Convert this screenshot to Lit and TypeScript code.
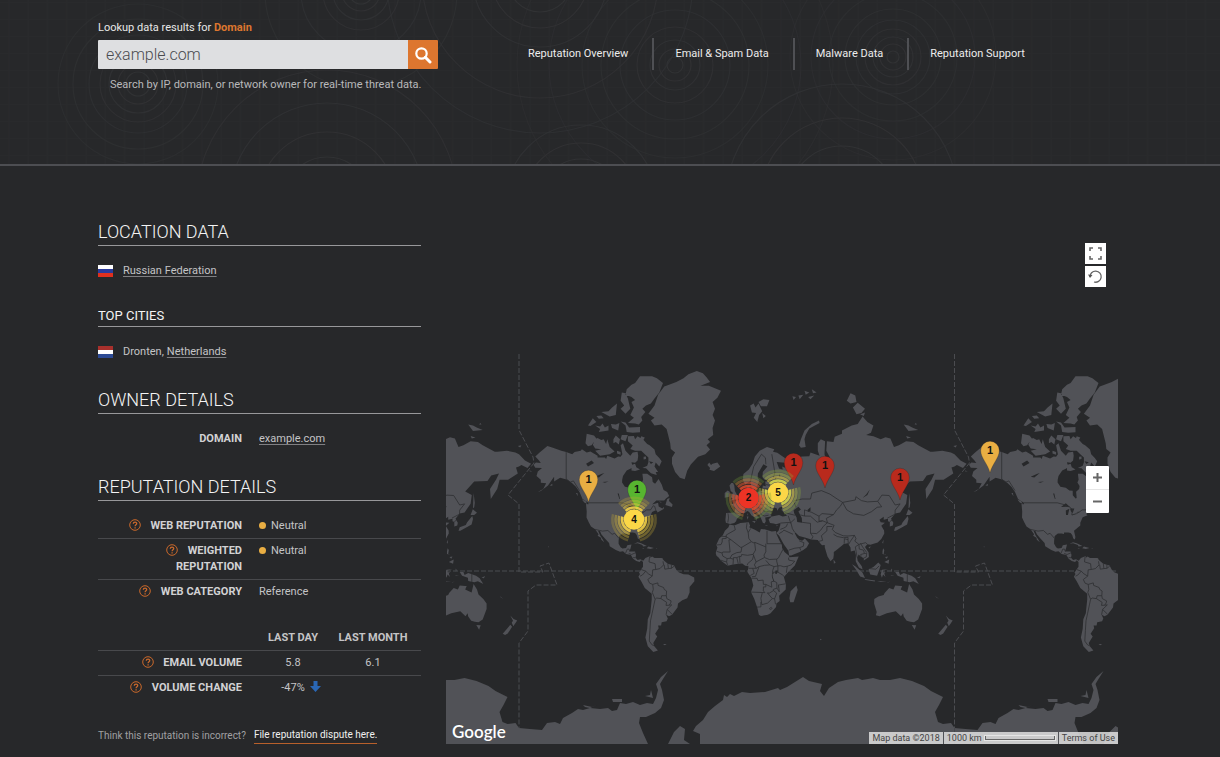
import { LitElement, html, css, svg } from "lit";
import { customElement, property, state } from "lit/decorators.js";

/* ---- Map projection: Mercator, one world spans WORLD units ---- */
const WORLD = 435.5;
const LON0 = 736.75;
const EQUATOR = 571;
const R = WORLD / (2 * Math.PI);

const project = (lon: number, lat: number): string => {
  const x = LON0 + (lon * WORLD) / 360;
  const y = EQUATOR - R * Math.log(Math.tan(Math.PI / 4 + (lat * Math.PI) / 360));
  return `${x.toFixed(1)} ${y.toFixed(1)}`;
};
const trace = (points: string, close: boolean): string =>
  "M" +
  points
    .split(",")
    .map((p) => {
      const [lon, lat] = p.trim().split(" ").map(Number);
      return project(lon, lat);
    })
    .join("L") +
  (close ? "Z" : "");

/* Coastlines as "lon lat" pairs */
const LAND = [
  "-168 65.6,-166 66.4,-162 66.2,-163.5 67,-166.5 68.3,-163 69.5,-156.5 71.3,-152 70.8,-145 70,-141 69.6,-136 69,-134 69.6,-129 70,-128 70.4,-124 69.5,-121 69.8,-115 68.5,-115 68,-109 68,-108 67.5,-107 68.5,-101 67.7,-98 68.3,-96 68.2,-94.5 69,-96 71.5,-94 72,-92 70,-91 69.6,-88 68.5,-86 69.5,-82 69.7,-81.5 68.5,-82 67,-84 66.3,-87 66.5,-86 64.8,-88 64.2,-91 63.6,-94 61.5,-94.7 60,-94.8 58.8,-92.5 57,-88 56.5,-85 55.3,-82.3 55.1,-82.2 52.9,-80 51.3,-79 51.6,-79.5 54.6,-77 56,-76.6 57.3,-78.4 58.8,-77.4 60,-78 62.4,-74 62.4,-70 61,-69.5 59,-67.5 58.3,-64.6 60.3,-62 58,-60.5 55.5,-57.5 54.5,-55.8 52.5,-58.5 51.3,-60 50.2,-66.5 50.2,-70 48,-65 49,-64.5 47,-61.5 45.8,-60 46.8,-60.5 45.5,-65.5 43.5,-66 44.5,-67 44.8,-70 43.8,-71 42.3,-70 41.8,-74 40.6,-76 37,-76 35.2,-78 33.9,-81.2 31.5,-80.1 27,-80.5 25.2,-81.8 26,-82.7 28.5,-84 30,-86 30.4,-89.5 30.3,-89.5 29.2,-91.5 29.5,-94.5 29.5,-97.2 27.7,-97.7 24,-97.7 22,-96 19.2,-94.5 18.2,-91.5 18.6,-90.5 20.8,-87 21.5,-87.8 18.3,-88.7 15.9,-84 15.8,-83.3 13,-83.7 10.9,-82 9,-79.6 9.6,-77.3 8.5,-77.5 7.5,-79 8.9,-80.3 7.4,-83 8.3,-85.7 10,-87.5 13,-91.5 14,-94 16.1,-96.5 15.7,-100 17,-105 20,-105.5 22.5,-109 26,-112 29,-113 31.2,-114.8 31.7,-112.8 28,-111 25.5,-109.5 23.1,-112 25,-112.2 26.5,-115 28,-114.2 29,-117.1 32.6,-120.5 34.5,-122.5 37.5,-124.2 40.4,-124 44,-124.6 48.4,-122.5 48.2,-123 49.2,-127.5 51,-130 54.5,-133 57,-136 58.5,-140 60,-146 60.8,-151 59.3,-151 61.2,-153.5 59.5,-156 57.5,-162 55,-164.5 54.5,-160 56,-157.5 58.5,-162 58.7,-162 60,-165.5 61.5,-164.5 63.2,-161 64.5,-166.5 64.6",
  "-77.3 8.5,-75.5 10.7,-71.5 12.3,-71.5 10.9,-70 12,-68 10.7,-62 10.7,-60 8.5,-57 6,-51.8 4.5,-50 1,-48 -1,-44 -2.7,-40 -2.9,-35.2 -5.3,-35 -8.5,-39 -13,-39 -17.5,-41 -22,-45 -23.5,-48.6 -26,-49 -28.8,-53.5 -34,-56 -35,-58.4 -34,-57 -36.5,-58 -38.3,-62 -39,-62.5 -41,-65 -41,-64.5 -42.7,-67.5 -46,-65.8 -47.5,-69 -51,-68.3 -52.5,-65.2 -54.7,-69 -55.4,-73.5 -52.7,-75.5 -48,-74 -43,-73.5 -37,-71.5 -33,-70.3 -23,-70.3 -18.4,-76 -14,-79 -8.5,-81.3 -4.7,-80 -2.5,-80.8 -1.5,-79 1.5,-77.5 3.5,-77.5 7.5",
  "-73 78.2,-68 79.5,-65 81,-60 82,-56 82.2,-50 82.5,-44 82.9,-40 83.3,-33 83.6,-28 83.4,-25 83,-22 82.5,-30 82.1,-23 82.1,-13 81.5,-16 80.6,-20 80,-18 79,-20 78,-18 77,-20 75.5,-19.5 74,-24 73,-22 72.3,-25 71.5,-22 70.3,-26 69,-32 68.2,-38 65.7,-41 63.5,-43 60.2,-47 60.8,-51 63,-53.5 66,-53.5 68,-51 69.5,-54.5 70.5,-55 72,-58 75.3,-62 76.2,-68 76,-71 77,-68 77.5",
  "-90 76.5,-84 76.4,-81 76.2,-78 77,-79 77.6,-75.5 78.5,-78 79,-75 79.5,-71 79.8,-68 80.5,-64 81.3,-61 82.4,-66 82.9,-70 83.1,-80 83.1,-84 82.4,-87 82.2,-91 81.7,-92 81,-87 80.7,-84 80.3,-87 80,-85 79.2,-88 78,-85 77.5",
  "-95 81.3,-92 81.2,-90 80.5,-88 79,-92 78.2,-96 79,-93 79.5,-96 80.2",
  "-96 76.8,-92 76.6,-89 75.6,-80 75.7,-80 74.6,-86 74.5,-91 74.7,-92 76",
  "-90 73.7,-85 73.8,-84 73,-82 73.7,-77 72.8,-74 71.8,-72 71.5,-68 70.3,-67 69,-64 67.8,-62 66.8,-64 65,-67 66.4,-68 65,-65 63,-67 63,-66 61.9,-71 62.6,-75 64.4,-78 64.5,-74 65.3,-73 66.5,-73 68,-76 69,-79 70,-84 70,-88 70.5,-86 71.4,-90 72.5",
  "-119 71.6,-117 73,-115 73.3,-112 72.8,-110 73,-108 71.8,-107 73,-105 71,-101 69.8,-105 69,-113 68.5,-117 70,-112 70.4,-117 70.6",
  "-125 72,-124 74.3,-118 73.9,-116 73.2,-120 71.5,-123 71.2",
  "-117 76,-113 75.8,-111 76.4,-109 75.6,-106 76,-106 75,-114 74.7,-113 75.3",
  "-102 72,-102 73,-100 73.9,-96.5 73,-97.5 71.7,-100 72.3", "-95 74,-90 74,-92 72.5,-96 73",
  "-104 76.3,-100 76.2,-97 76.5,-98 75,-103 75.5", "-112 78.5,-106 78.6,-103 79.2,-99 79.8,-100 78,-105 77.7",
  "-123 76,-119 77.4,-116 76.7,-121 75.9", "-116 77.8,-112 77.9,-110 77.4,-114 77.3", "-99 70,-96 69.6,-96 68.8,-99 69.2",
  "-87 65.5,-84 66,-83 64.8,-80 64,-84 63.4,-87 63.6", "-79 73.7,-76 73.4,-77 72.9,-80 73", "-77 68.2,-75 68.3,-75 67.5,-77 67.4",
  "-59 47.8,-57.5 51,-55.5 51.5,-56 50,-53 48,-53.5 46.7", "-128 50.7,-125 50,-123.5 48.4,-126 49.2", "-133 54,-131.7 54,-131.3 52.4",
  "-64.4 49.9,-61.8 49.2,-63 49.1", "-84.9 21.9,-82 23.1,-79 22.4,-74.3 20.2,-77.5 19.9,-78 21,-82 22.4", "-74.4 18.4,-73 19.9,-68.5 18.6,-71.5 17.8",
  "-78.3 18.4,-76.3 18.2,-77.2 17.8", "-67 18.4,-65.7 18.3,-66 18", "-61.8 10.7,-61 10.7,-61.5 10.1", "-155.9 20,-155 19.6,-155.6 19",
  "-154.5 57.5,-152.5 58.3,-152.5 57.4", "-171.5 63.6,-169 63.3,-171 63.2", "-61 -51.5,-58 -51.5,-59.5 -52.2",
  "-24.3 65.5,-22.8 66.4,-21.3 65.5,-20 66,-16 66.4,-13.6 65,-18.8 63.4,-22.6 63.9,-22 64.5",
  "11 79.5,14 79.8,15.5 79.2,18 79.8,21 78.6,18.5 78,17 76.7,14 77.5,16 78.3,12.5 78.4", "18 80,22 80.4,27 80.3,25 79.4,20 79.4", "21 78.3,24 77.8,22 77.4",
  "46 80.8,49 80.7,47 80.3", "51 80.9,55 81,52 80.4", "56 81.5,60 81.3,57 81", "59 80.7,64 80.9,61 80.4", "62 81.7,66 81.3,63 81.2",
  "91 80.2,94 81.2,98 80.9,99 80,94 79.8", "96 79.2,100 79.9,106 79,103 78.3,99 78.1", "102 78.1,106 78.4,105 77.8",
  "51.5 71.5,53 73,56 75,62 76.3,68 77,68.5 76.5,60 75.4,57 74,56 73,57 71,53 70.8",
  "138 76.2,142 76,145 75.6,150 75.1,142 74.9", "140 73.8,144 73.4,141 73.2", "148 76.5,149 76.2,147 76.2", "179 71.3,182 71.5,181 70.9",
  "-9 37,-9.4 38.8,-8.8 43.2,-1.8 43.4,-1.2 46,-4.7 48.3,-1.5 48.7,-1.6 49.7,1.5 50.5,4 51.8,5 53.3,8.5 53.8,8.2 57,10.6 57.6,10.5 55,11 54,14 54,18.5 54.7,21 55,21.5 57.5,24 57.2,23.5 59.2,28 59.5,30 60,23 60,21.3 61,21.5 63,25.3 65,22 65.8,17.5 62.5,17.3 60.7,18.8 59.8,16.5 57,14.2 55.5,12.8 55.6,11.2 59,10.5 59.3,7 58,5 60,5.5 62.3,10 64,13 66,15 68.3,19 70,25 71,31 70.4,30 69.7,33.5 69.4,41 67.5,40 66.3,33 66.6,35 64.3,38 64,37.5 65,40 64.6,40.5 66,43.5 66.3,44 68.5,46 67,49 67.8,54 68.3,60 68.4,61 69.5,65 69,68.5 68.5,67 70,67 72,69.5 73,73 72.5,72.5 69,74 67,77 68,74 70,74.5 72.5,80 72.3,81 73.6,87 74.3,87 75,95 76,100 76.3,104 77.7,108 76.7,113 76,111 74.5,107 74,113 73.7,119 73,123 73.5,127 73.2,130 71,134 71.5,140 72.5,146 72.3,150 71.5,160 69.7,162 69.7,170 70,177 69.5,180 69,185 67,190 66,187 64.5,182 65.5,180 65,177.5 64.7,179 62.5,171 60,164 60,163 58,162 56,156.7 51,156 56,161 60,163.5 62.5,157 61.7,154 59.5,143 59.3,135.5 54.8,141 53,140 48.5,135 43.5,131 42.8,127.5 39.6,129.4 37,129 35.2,126.5 34.5,126.5 37.5,125 38,125 39.6,121.5 39,121.5 40.9,118 39,119 37.3,122.5 37,119.5 35,121.8 31.8,122 29.5,119.5 25.5,116.5 23,110.5 21.2,108 21.6,106 19.5,109 15,109.2 11.5,105 8.7,105 10.5,102.5 12,100.8 13.4,99.5 11,100 8.5,103.4 4,104 1.3,101 2.8,98.3 8,98.5 13,97.5 16.8,94.3 16,94 19,91.8 22.4,88.5 21.7,86.8 20.5,82 16.7,80.2 15.5,80.2 13,79.8 10.3,77.5 8,75 12,72.8 19,72.7 21,70.5 20.8,69 22.3,67 24.8,61.5 25.1,57 26.5,51.5 27.8,48.5 30.2,48 29.8,50 26.5,51.5 25,54 24.2,56.3 26,59.8 22.4,57.8 19,55 17,52 15.6,45 12.8,43.3 12.7,42.7 16.5,39 21.3,35 28,32.6 30,34.5 31.5,36 35.5,36 36.8,32.5 36,30.5 36.5,27.5 36.8,26.3 39.3,29 41,35 42,38 41,41.5 41.5,37 45,38 47,35 46.3,33.5 44.5,33 46,30.7 46.4,28.7 44,28 42,29 41.2,26 40.7,23.5 40.3,24 38,23 36.5,21.5 37,19.4 41,19 42,15 44.3,13.6 45.6,12.3 45.2,13.6 43.5,18.5 40.2,16.5 39.8,16 38,15.7 40,12.3 41.7,10.3 43.8,8.8 44.4,6.5 43.1,3.1 43.2,3.2 41.8,0 39.5,-.5 38,-2 36.8,-5.5 36.1",
  "-5.5 50.1,-3 51.4,-5 51.8,-4.3 53.3,-3 54,-5 55,-6 57.5,-4.5 58.6,-3 58.6,-2 57.5,-1.5 55,.3 53,1.7 52.5,1 51.2", "-10 51.7,-10 54,-7.5 55.3,-5.7 54.5,-6.3 52.2",
  "12.5 38,15.5 38.2,15 36.8", "8.3 41,9.7 41,9 39", "8.7 42.5,9.4 43,9.3 41.5", "23.6 35.5,26.2 35.2,24 35", "32.4 35,34.5 35.6,33 34.6", "11 55.7,12.5 56,12 55",
  "-6 35.8,-2 35.1,3 36.8,10 37.3,11 35,10.3 34,15 32.3,19 30.4,20 32.7,23 32.6,29 31,32.5 31.3,32.5 29.8,35.5 24,37.3 21,37.5 18.7,39.5 15.5,43.2 12.5,43.5 11.3,51.2 11.9,48 4.5,42 -1.5,39 -5,40.6 -11,40.5 -15,35 -20,35.5 -24,32.8 -26,32.5 -28.5,28 -33,25.7 -34,20 -34.8,18.3 -34,17 -29,14.5 -22.5,11.8 -17,13.7 -12,12.2 -6,9 -1,9.7 4,7 4.4,4.5 6.3,1 6,-4 5.2,-7.5 4.4,-13 8.5,-15 11,-16.7 12.5,-17.4 14.7,-16 19,-17 21,-14.5 26,-11.5 28.3,-9.8 31.5,-6.8 34",
  "49.3 -12,50.4 -15.5,47 -25,44.2 -25,43.5 -22,44.5 -16.5",
  "113.7 -22.5,117 -20.7,121.5 -19.5,122.2 -18,126 -14,129.5 -15,131 -12,135.5 -12.2,136.8 -12.3,135.5 -15,140.8 -17.6,142.5 -10.8,145.3 -15,146.5 -19,150.5 -22.5,153.2 -26,153.2 -30,150 -37.2,146.5 -39,143.5 -38.7,140.5 -38,138 -35.2,137.5 -33,135.8 -35,131.5 -31.5,124 -33,118 -35,115 -34.3,115.7 -32,113.5 -26",
  "144.7 -40.8,148.3 -40.9,147 -43.6", "172.8 -34.5,175.5 -36.8,178.5 -37.8,175.3 -41.5,174 -39.3,175 -38", "172.8 -40.6,174.3 -41.8,170.7 -45.9,168.5 -46.6,166.5 -46",
  "131 -.8,134 -.8,135 -3.3,138 -1.6,144.5 -3.9,147.5 -6,150.5 -10.6,146 -8.5,143 -9.2,138 -8.3,137.8 -5.5,133 -4", "149 -5.5,152 -4.2,151 -6",
  "109 1.5,113 3.3,117 7,119 5,117.8 1,116 -4,110.3 -3", "95.3 5.6,98 4,104 -1.5,106 -5.8,102 -4.5,98.7 1", "105.5 -6.5,114.4 -7.8,114 -8.7,106.5 -7.5", "116 -8.5,124 -8.4,119 -9",
  "120 -5.5,119 -3,120 1,125 1.5,121 .5,121 -1,123 -1,122 -2,123 -5,121 -3", "127.5 2,128.5 1,127.8 -.8", "127 -3.3,130.5 -3.2,128 -3.6", "124 -10,127 -8.5,125 -9.3",
  "120.5 16,121 18.5,122 17,121.5 14,124 13,120.5 14", "122 7.5,126 9.5,125.5 6", "122.5 11.5,125 12,124 10", "120.2 23,121.5 25.2,121 22", "109 19.5,111 19.8,109.5 18.3",
  "130 31.5,131 34,136 35.5,137 37.2,140 40,141.4 41.3,142 39.5,140.8 35.8,136 33.7,131.5 31.5", "140 42,141.8 45.4,145.3 43.3,143 42", "142 46,142.5 54,143.5 49,143 46.5", "80 9.5,81.8 7,80.3 6",
  "164 -20.3,167 -22.3,165 -21.5", "69 -48.8,70.3 -49.2,69 -49.6",
].map((p) => trace(p, true)).join("");

/* Lakes and inland seas */
const WATER = [
  "47 44.8,51 46.8,53 45.3,51 44,53.8 40,54 37,50 37.5,49.5 40.3,47.5 43", "58.5 45,61 46.5,61 44.5,59 43.8", "104 51.6,108 53,110 55.7,107 53.3",
  "-92 46.7,-88 48.8,-84.5 46.6,-88 46.8", "-87.8 42,-86.3 42,-85 45.7,-88 44.7", "-84.5 45.8,-81 45.8,-82.3 43.2,-83.7 44", "-83 41.6,-79 42.8,-82 42.2", "-79.5 43.3,-76.3 43.7,-78 43.9",
  "-98.5 53.8,-97 51,-96.5 51,-97.5 53.8", "-117 61.2,-112 62.3,-109.5 62.7,-114 60.9", "-124.5 66,-120 67,-118 66.2,-123 65", "-111 59,-106 59.3,-109 58.7", "-72.5 66.8,-69 66.5,-71 65.9",
  "31 60.8,33 61,32 59.9", "35 62.5,36.3 61.3,35 61.2", "32 .5,34 .3,33 -2.4,31.7 -2", "29.3 -3.5,31 -8.6,30.3 -8.5,29.1 -5", "34 -10,34.9 -13.8,34.3 -13",
].map((p) => trace(p, true)).join("");

/* National borders */
const BORDERS = [
  "-141 69.6,-141 60.2,-137.5 59,-135 59.5,-130 55.2", "-123 49,-95 49,-89.5 48,-84.5 46.5,-82.5 45.3,-83 42,-79 42.8,-76.3 44,-74.5 45,-71.3 45,-69 47.4,-67.8 47,-67 45",
  "-117.1 32.5,-111 31.3,-106.5 31.7,-103 29,-101 29.7,-97.3 26", "-92 14.5,-90.5 17.8,-89 17.8,-88.5 16", "-89.3 14.4,-87 13.5,-83.3 15", "-85.7 11,-83.7 10.9",
  "-72 12,-72.5 7.5,-67.5 6,-67 1.2,-69.5 1,-69.9 -4.2,-73 -2.3,-75.3 -.2,-79 1.2", "-67 1.2,-63.5 2,-60.5 5,-61 8", "-60 5,-59.5 1.5,-56.5 2,-57 6", "-56.5 2,-54 2.2,-54 5.5", "-54 2.2,-51.7 4",
  "-80 -4.3,-78 -3.3,-75.3 -.2", "-69.9 -4.2,-73.5 -7,-72 -10,-69.5 -11,-69 -15,-69.8 -17.5,-67.5 -22.8,-66.2 -21.8,-62.7 -22.2,-62 -20,-58.2 -20,-58 -16.3,-60 -15,-60.5 -13.5,-65 -11.8,-65.3 -9.8,-69.5 -11",
  "-62.7 -22.2,-58 -25,-58.5 -27.3,-55.8 -27.2,-54.6 -25.5,-54.3 -24,-57.8 -22.2,-58.2 -20", "-67.5 -22.8,-68.5 -27,-70 -33,-71.3 -38,-71.8 -44,-72.3 -50,-70 -52,-68.5 -52.4", "-55.8 -27.2,-53.7 -27,-57.6 -30.2,-53.5 -33.6", "-57.6 -30.2,-58.4 -34",
  "-2 35,-1.2 32.2,-8.7 28.5,-8.7 27.3,-13 27.6", "-8.7 27.3,-8.7 26,-12 25.8,-12 23.4,-13 21.3,-17 21", "-8.7 27.3,-4.8 25,3.2 19.2,4.2 19.2,12 23.5,14.2 22.6,15 23,24 19.5", "8.5 36.8,8 33.5,9.5 30.3,10 26,12 23.5", "9.5 30.3,11.5 33.2", "25 31.5,25 22,36.8 22", "24 22,24 15.7,22.5 13,23 11,27 9.5,33 9.8,34.5 10.8,36.3 14.3,38.5 18",
  "-4.8 25,-6.5 24.9,-5.5 15.5,-11.5 15.5,-12.2 14.7,-16.5 16", "4.2 19.2,3.5 15.4,0 15,-4 13.2,-5.5 10.5,-8 10.2,-11.5 12.2,-12.2 14.7", "-8 10.2,-8.4 7.5,-10.5 8,-13.3 9", "-8.4 7.5,-7.5 4.5", "-5.5 10.5,-2.8 9.7,-3.1 5.2", "-2.8 9.7,-2.8 11,0 11,1.2 6.2", "0 11,2.3 12,2.7 6.4", "2.3 12,3.6 11.8,4 13.5,9 12.9,13.5 13.7,15.5 17,14.8 22.8", "13.5 13.7,15 10,16 7.5,22.8 11", "14 13,13 9.5,9 6,8.7 4.7", "16 7.5,14.6 5,16.2 2.2,9.8 2.2", "16.2 2.2,18.5 3.6,23 4.7,27.3 5,30.9 3.6,29.7 .5,29.5 -3,29.3 -4.5", "27.3 5,24 8.7", "13.2 2.2,14.4 -2,11.2 -3.7", "18.5 3.6,16.5 -1.5,15.5 -4.5,12.5 -4.7", "12.5 -5.9,16.8 -6,17.5 -8,21.8 -7.5,22 -11,24 -11,24 -13,22 -13,22 -16.2,23.3 -17.6,11.8 -17.2", "30.9 3.6,34 4.2,34 -1,37.7 -3.1,39.3 -4.7", "34 -1,30.5 -1,30 -2.5", "34 4.2,36 4.4,39 3.5,41.8 4,45 5,48 8,43 9,42.8 11", "34 4.2,33 8,33 9.8", "41.8 4,41 -1.6", "24 -11,29 -13.3,28.5 -9,30.7 -8.3,33 -9.5,33.3 -14,30.2 -15,30.4 -16,27 -18,25.3 -17.8", "30.4 -16,33 -18,31.3 -22.3,32 -26.5", "33.3 -14,35.2 -17,34.5 -11.5,40.4 -10.5", "25.3 -17.8,29.4 -22.2,31.3 -22.3", "29.4 -22.2,25.5 -25.6,20.8 -26.8,20 -22,21 -18", "20 -24.8,20 -28.4,16.7 -28.6", "27 -29.7,28.5 -28.7,29.3 -29.5,28 -30.4,27 -29.7",
  "-7.3 43,-7 41.9,-6.8 40,-7.4 37.2", "-1.8 43.4,3 42.5", "2.5 51,6 49.5,8.2 49,7.6 47.6,6 46.3,7.5 44", "7 53.3,6 50.8,6 49.5", "8.6 54.9,9.9 54.8", "7.6 47.6,13 47.6,14 48.6,12.1 50.3,14.8 51,14.3 53.9", "14.8 51,18.8 49.5,22.5 49.1,24 50.8,23.6 52.6,23.3 54,19.8 54.4", "7 46,10.5 46.8,13.7 46.5,13.7 45.6", "14 48.6,17 48,22 48,27 48.3,28.2 45.5", "17 48,16.3 46.5,19 45.9,21 46.2,22.7 44.2,28.5 43.8", "19 45.9,19.3 43.5,20.5 42,23 41.3,26.3 41.8", "24 50.8,30.5 51.5,34 52,40 49.6,38.3 47.2", "23.6 52.6,28 56,31 53,30.5 51.5", "27.5 59.3,28 56,21 56", "24.3 57.9,27.4 57.6", "30 60.5,31.5 62.8,29 69", "24.1 65.8,23.7 67.9,20.5 69,14 65,12 61,11.3 59",
  "40 43.3,47 42,48.5 41.8", "42.5 41.5,44.5 37,48 39.5", "36 36.8,42.3 37.2,44.8 37,46 33,48 30.3", "42 36.5,41 34.4,38.8 33.4,36 32.5", "39 32,46.5 29", "35 29.5,38 31,39 32", "43 17,48 18.5,52 19,55 20,55.5 22.8,51.6 24.2", "52 19,53 16.6",
  "49 46.5,47 50,54 51,61 51,62 54,70 55.2,77 53.5,83 51,87.5 49.2", "87.5 49.2,98 50.5,98.5 52.2,103 50.2,108 49.5,116.5 49.8,120 53,126 52.8,131 47.8,135 48.4,131 44.9,130.8 42.5", "87.5 49.2,91 45,96.5 42.7,105 41.7,111.5 44,116 46.5,119.8 46.8,116.5 49.8", "87.5 49.2,85.5 47,82.5 45,80 42.2,74 39.8,75 37,80.5 35.3,79 32.5,81.5 30.3,88 27.9,92 27.8,97.3 28.2,98.6 25.8,97.6 24,101 21.5,106.5 22.8,108 21.6", "54 37.3,61 36.6,61 34,61 29.8,63 27.2,61.6 25.2", "52.5 42,56 41.3,56 45,62 43.5,68 41.2,70.5 42.8,80 42.2", "56 41.3,61 41.2,66.5 37.4,71 38.3,75 37", "68 41.2,68 38,71 38.3", "61 29.8,66 29.5,69.5 32,71.5 34.5,74.8 37", "68 23.8,71 24.5,70 28,74.5 31.5,74.5 34.5,79 34.5", "80 29,83 27.4,88.2 26.5,92 26.8,92 25,89 25.8,88.8 22", "92 25,92.3 21.2", "97.3 28.2,94 24,92.5 21.5", "101 21.5,98 19.5,98.7 16,99.5 11", "101 21.5,101.3 17.8,104.8 17,105.5 14.3,102.5 13.5,102.8 11.8", "105.5 14.3,107.5 14.5,107 11.5,104.5 10.4", "102.2 22.5,104 19.5,107.5 15", "124.5 40,130.5 42.3", "126.5 37.8,128.3 38.6", "109.7 2,115 1.5,117.7 4.2", "141 -2.6,141 -9.1",
].map((p) => trace(p, false)).join("");

/* Antarctica in map units; the pole side runs past the lower edge */
const ANTARCTICA =
  "M519 728L530 729 542 730 547 723 555 722 560 724 563 718 572 713 578 709 583 710 590 708 600 709 608 708 612 711 617 710 620 703 626 704 633 702 640 705 647 703 653 704 656 698 658 690 656 684 661 677 668 671 663 679 660 684 662 690 664 700 661 708 655 713 646 717 640 717 639 723 643 733 648 744 668 744 674 732 680 726 685 729 684 740 690 744 700 744 700 734 693 731 696 726 703 720 708 712 715 706 723 700 724 695 727 697 730 694 734 696 742 692 750 693 765 692 778 688 780 690 787 687 795 682 803 677 809 681 822 684 820 691 824 696 829 688 838 682 846 680 858 678 862 680 868 679 873 678 880 680 890 680 900 678 912 681 924 686 931 691 943 697 939 705 935 712 938 722 943 724 951 723 954.5 728V760H519Z" +
  "M583 705L592 707 597 705 590 708 585 707ZM612 699L622 699 622 702 613 702ZM651 690L653 698 645 696 650 695Z";

const DATE_LINE = "M519 354V430L533 457 534 463 508 495 519 504V572H543L540 566 549 563 557 585H536L528 591V631L519 643V728";

type Pin = { x: number; y: number; color: string };
const PINS: Pin[] = [
  { x: 588.5, y: 480, color: "#e9ae43" },
  { x: 637, y: 490, color: "#57b530" },
  { x: 793.5, y: 463, color: "#b92a1d" },
  { x: 825, y: 466, color: "#b92a1d" },
  { x: 900, y: 478, color: "#b92a1d" },
  { x: 990, y: 451, color: "#e9ae43" },
];
type Cluster = { x: number; y: number; count: number; color: string; rings: string[] };
const CLUSTERS: Cluster[] = [
  { x: 634, y: 519.5, count: 4, color: "#fbd747", rings: ["#fbd747", "#e9c840", "#d6b83a", "#c4a834"] },
  { x: 778, y: 492.5, count: 5, color: "#fbd747", rings: ["#d8dc4c", "#e4cf45", "#bccb45", "#8fae3c"] },
  { x: 748.5, y: 498, count: 2, color: "#ec3325", rings: ["#e04a2b", "#e2562e", "#c98a35", "#6f9a36"] },
];

const arc = (r: number, from: number, to: number): string => {
  const at = (deg: number) => {
    const a = ((deg - 90) * Math.PI) / 180;
    return `${(r * Math.cos(a)).toFixed(2)} ${(r * Math.sin(a)).toFixed(2)}`;
  };
  return `M${at(from)}A${r} ${r} 0 0 1 ${at(to)}`;
};

@customElement("world-map")
class WorldMap extends LitElement {
  static styles = css`
    :host { display: block; position: relative; font-family: Roboto, sans-serif; }
    .canvas { display: block; width: 100%; height: auto; }
    .land { fill: #515257; }
    .water { fill: #27282a; }
    .border { fill: none; stroke: #2d2e31; stroke-width: 0.8; }
    .dash { fill: none; stroke: #4b4c50; stroke-width: 1; stroke-dasharray: 5 2; }
    .count { font: bold 11px "Liberation Sans", Arial, sans-serif; text-anchor: middle; fill: #111; }
    .count.small { font-size: 10px; }
    .tools { position: absolute; top: 19px; right: 12px; display: grid; gap: 2px; }
    .tool { display: grid; place-items: center; width: 21px; height: 21px; padding: 0; border: 0; background: #fff; cursor: pointer; }
    .zoom { position: absolute; top: 242px; right: 9px; display: grid; width: 23px; border-radius: 1px; background: #fff; }
    .step { display: grid; place-items: center; height: 23px; padding: 0; border: 0; background: none; cursor: pointer; }
    .step + .step { border-top: 1px solid #e6e6e6; height: 24px; }
    .brand { position: absolute; left: 6px; bottom: 0; color: #fff; font: 600 17px/24px Lato, sans-serif; text-decoration: none; }
    .legal { position: absolute; right: 0; bottom: 0; display: flex; gap: 1px; font-size: 9px; line-height: 12px; color: #444; }
    .cell { display: flex; align-items: center; gap: 3px; padding: 0 3px; background: rgba(225, 225, 225, 0.84); color: inherit; text-decoration: none; white-space: nowrap; }
    .scale { width: 70px; height: 4px; border: 1px solid #666; border-top: 0; box-sizing: border-box; outline: 1px solid rgba(255, 255, 255, 0.5); }
  `;

  render() {
    return html`
      <svg class="canvas" viewBox="446 224 672 520" role="img" aria-label="World map of sender locations">
        <defs>
          <g id="world">
            <path class="dash" d=${DATE_LINE}></path>
            <path class="land" d=${LAND}></path>
            <path class="land" d=${ANTARCTICA}></path>
            <path class="water" d=${WATER}></path>
            <path class="border" d=${BORDERS}></path>
          </g>
        </defs>
        <path class="dash" d="M446 571H1118"></path>
        ${[-1, 0, 1].map((n) => svg`<use href="#world" x=${n * WORLD}></use>`)}
        ${PINS.map(
          (p) => svg`<g transform="translate(${p.x} ${p.y})">
            <path d="M0 22C-2 13-9.300 7-9.300-.5A9.300 9.300 0 0 1 9.300-.5C9.300 7 2 13 0 22Z" fill=${p.color} stroke="#222" stroke-opacity=".35" stroke-width=".7"></path>
            <text class="count" y="3">1</text></g>`
        )}
        ${CLUSTERS.map(
          (c) => svg`<g transform="translate(${c.x} ${c.y})">
            ${c.rings.map((color, i) =>
              [0, 120, 240].map(
                (turn) => svg`<path d=${arc(12 + i * 3.2, turn - 44, turn + 44)} fill="none" stroke=${color} stroke-width="2.6" stroke-opacity=${[0.85, 0.55, 0.42, 0.3][i]}></path>`
              )
            )}
            <circle r="10.300" fill=${c.color}></circle>
            <text class="count small" y="3">${c.count}</text></g>`
        )}
      </svg>
      <div class="tools">
        <button class="tool" aria-label="Full screen">
          <svg width="13" height="13" viewBox="0 0 13 13" fill="none" stroke="#666" stroke-width="1.600"><path d="M1 4V1h3M9 1h3v3M12 9v3H9M4 12H1V9"></path></svg>
        </button>
        <button class="tool" aria-label="Reset map">
          <svg width="15" height="15" viewBox="0 0 15 15" fill="none" stroke="#666" stroke-width="1.300"><path d="M2 8A5.600 5.600 0 1 1 6 13"></path><path d="M0 5.500L4.500 6 2 9Z" fill="#555" stroke="none"></path></svg>
        </button>
      </div>
      <div class="zoom">
        <button class="step" aria-label="Zoom in"><svg width="9" height="9" viewBox="0 0 9 9"><path d="M4.500 0V9M0 4.500H9" stroke="#666" stroke-width="2"></path></svg></button>
        <button class="step" aria-label="Zoom out"><svg width="9" height="9" viewBox="0 0 9 9"><path d="M0 4.500H9" stroke="#666" stroke-width="2"></path></svg></button>
      </div>
      <a class="brand" href="#">Google</a>
      <div class="legal">
        <span class="cell">Map data ©2018</span>
        <span class="cell">1000 km<span class="scale"></span></span>
        <a class="cell" href="#">Terms of Use</a>
      </div>
    `;
  }
}

@customElement("help-mark")
class HelpMark extends LitElement {
  @property() topic = "";
  static styles = css`
    :host { display: inline-block; vertical-align: -2px; margin-right: 7px; }
    .mark { display: block; width: 12px; height: 12px; padding: 0; border: 0; background: none; cursor: pointer; }
    .glyph { display: block; }
  `;
  render() {
    return html`<button class="mark" aria-label="About ${this.topic}">
      <svg class="glyph" width="12" height="12" viewBox="0 0 12 12" fill="none" stroke="#c9682b">
        <circle cx="6" cy="6" r="5.300" stroke-width="1"></circle>
        <path d="M4.300 4.800C4.300 2.600 7.800 2.600 7.700 4.700 7.600 5.900 6.100 5.900 6.100 7.300M6.100 8.200V9.400" stroke-width="1.300"></path>
      </svg>
    </button>`;
  }
}

const RIPPLES: [number, number, number[]][] = [
  [138, 84, [12, 20, 29, 38, 49, 65, 80]],
  [675, 65, [8, 16, 25, 38, 55, 74, 93, 126, 158]],
  [893, 57, [6, 13, 20, 28, 37, 48, 64, 82, 103]],
  [540, -20, [32, 48, 67, 118, 153]],
  [327, 200, [43, 68, 97, 130]],
  [361, -8, [12, 19, 28, 38, 60, 96]],
  [581, 200, [41, 57, 75]],
  [842, 200, [54, 82, 116]],
];

@customElement("app-root")
class AppRoot extends LitElement {
  @state() private query = "example.com";

  static styles = css`
    :host { display: block; min-height: 100vh; background: #27282a; color: #c4c4c6; font-family: Roboto, sans-serif; font-size: 11px; line-height: 16px; }
    a { color: inherit; }
    .head { position: relative; overflow: hidden; border-bottom: 2px solid #4d4e52; }
    .backdrop { position: absolute; inset: 0; width: 100%; height: 100%; }
    .ripple { fill: none; stroke: #313234; stroke-width: 1.2; }
    .gridline { fill: none; stroke: #292a2c; stroke-width: 1; }
    .wrap { box-sizing: border-box; max-width: 1024px; margin: 0 auto; }
    .bar { position: relative; display: flex; align-items: flex-start; gap: 90px; height: 164px; }
    .lookup { width: 340px; padding-top: 20px; color: #e8e8e8; }
    .caption { display: block; margin-bottom: 4px; }
    .accent { color: #dd762f; font-weight: 700; }
    .field { display: flex; height: 29px; border-radius: 1px; overflow: hidden; }
    .query { flex: 1; min-width: 0; box-sizing: border-box; padding: 0 8px; border: 0; border-radius: 0; background: #dedfe1; color: #4a4b4f; font: 300 16px Roboto, sans-serif; }
    .go { display: grid; place-items: center; width: 30px; padding: 0; border: 0; background: #dd762f; cursor: pointer; }
    .hint { margin: 8px 0 0 12px; color: #b9b9bb; white-space: nowrap; }
    .nav { display: flex; padding-top: 38px; color: #ececec; }
    .link { padding: 8px 24px 8px 21px; text-decoration: none; white-space: nowrap; }
    .link:first-child { padding-left: 0; }
    .link + .link { border-left: 2px solid #4f5054; }
    .body { display: flex; gap: 25px; padding: 54px 4px 13px 0; align-items: flex-start; }
    .facts { flex: 0 0 323px; }
    .map { flex: 1; min-width: 0; margin-top: 4px; }
    h2, h3 { margin: 0; padding-bottom: 1px; border-bottom: 1px solid #98989a; color: #f4f4f4; }
    h2 { font-size: 18px; line-height: 24px; font-weight: 300; }
    h3 { margin-top: 28px; font-size: 13px; line-height: 18px; font-weight: 400; }
    .place { display: flex; align-items: center; margin: 17px 0 0; }
    .flag { margin-right: 10px; }
    .town { margin-right: 3px; }
    .u { text-decoration: underline #808083 1px; text-underline-offset: 2px; }
    .owner { margin-top: 28px; }
    .rep { margin-top: 24px; }
    .data { width: 100%; margin-top: 13px; border-collapse: collapse; table-layout: fixed; }
    .data.volume { margin-top: 22px; }
    .data tr + tr { border-top: 1px solid #48494c; }
    .data th, .data td { padding: 4px 0; vertical-align: top; text-align: left; font-weight: 400; }
    .data .key { width: 134px; padding-left: 10px; padding-right: 11px; text-align: right; font-weight: 700; text-transform: uppercase; color: #d2d2d4; }
    .data .value { padding-left: 6px; }
    .volume .day { width: 80px; text-align: center; }
    .volume .month { padding-right: 8px; text-align: center; }
    .data .title { font-weight: 700; }
    .dot { display: inline-block; width: 7px; height: 7px; margin-right: 5px; border-radius: 50%; background: #e9ae43; }
    .drop { margin-left: 5px; vertical-align: -1px; }
    .change { padding-left: 16px; }
    .dispute { display: flex; gap: 8px; margin: 28px 0 0; font-size: 10px; color: #a0a0a2; white-space: nowrap; }
    .file { color: #f0f0f0; text-decoration: none; border-bottom: 1px solid #b8602b; line-height: 14px; }
  `;

  private flag(colors: string[]) {
    return html`<svg class="flag" width="15" height="12" viewBox="0 0 15 12" aria-hidden="true">
      ${colors.map((c, i) => svg`<rect y=${i * 4} width="15" height="4" fill=${c}></rect>`)}
    </svg>`;
  }

  render() {
    return html`
      <header class="head">
        <svg class="backdrop" aria-hidden="true">
          <defs>
            <pattern id="grid" width="19.300" height="17" patternUnits="userSpaceOnUse"><path class="gridline" d="M9 0V17M0 2.500H19.300"></path></pattern>
          </defs>
          <rect width="100%" height="100%" fill="url(#grid)"></rect>
          ${RIPPLES.map(([x, y, radii]) =>
            radii.map((r, i) => svg`<circle class="ripple" cx=${x} cy=${y} r=${r} stroke-opacity=${1 - i * 0.07}></circle>`)
          )}
        </svg>
        <div class="wrap bar">
          <form class="lookup" @submit=${(e: Event) => e.preventDefault()}>
            <label class="caption" for="query">Lookup data results for <span class="accent">Domain</span></label>
            <div class="field">
              <input class="query" id="query" type="text" .value=${this.query} @input=${(e: Event) => (this.query = (e.target as HTMLInputElement).value)} />
              <button class="go" aria-label="Search">
                <svg width="18" height="18" viewBox="0 0 18 18" fill="none" stroke="#fff"><circle cx="7.500" cy="7.500" r="5.200" stroke-width="2.200"></circle><path d="M11.300 11.300L16 16" stroke-width="3" stroke-linecap="round"></path></svg>
              </button>
            </div>
            <p class="hint">Search by IP, domain, or network owner for real-time threat data.</p>
          </form>
          <nav class="nav">
            <a class="link" href="#">Reputation Overview</a>
            <a class="link" href="#">Email &amp; Spam Data</a>
            <a class="link" href="#">Malware Data</a>
            <a class="link" href="#">Reputation Support</a>
          </nav>
        </div>
      </header>
      <main class="wrap body">
        <section class="facts">
          <h2>LOCATION DATA</h2>
          <p class="place">${this.flag(["#ffffff", "#2b3a9c", "#e0301e"])}<a class="u" href="#">Russian Federation</a></p>
          <h3>TOP CITIES</h3>
          <p class="place">${this.flag(["#a8302c", "#ffffff", "#2c4a94"])}<span class="town">Dronten,</span><a class="u" href="#">Netherlands</a></p>
          <h2 class="owner">OWNER DETAILS</h2>
          <table class="data">
            <tr><th class="key" scope="row">Domain</th><td class="value"><a class="u" href="#">example.com</a></td></tr>
          </table>
          <h2 class="rep">REPUTATION DETAILS</h2>
          <table class="data">
            <tr><th class="key" scope="row"><help-mark topic="web reputation"></help-mark> Web Reputation</th><td class="value"><span class="dot"></span>Neutral</td></tr>
            <tr><th class="key" scope="row"><help-mark topic="weighted reputation"></help-mark> Weighted Reputation</th><td class="value"><span class="dot"></span>Neutral</td></tr>
            <tr><th class="key" scope="row"><help-mark topic="web category"></help-mark> Web Category</th><td class="value">Reference</td></tr>
          </table>
          <table class="data volume">
            <tr><td class="key"></td><th class="day title" scope="col">LAST DAY</th><th class="month title" scope="col">LAST MONTH</th></tr>
            <tr><th class="key" scope="row"><help-mark topic="email volume"></help-mark> Email Volume</th><td class="day">5.8</td><td class="month">6.1</td></tr>
            <tr><th class="key" scope="row"><help-mark topic="volume change"></help-mark> Volume Change</th><td class="day"><span class="change">-47%<svg class="drop" width="11" height="11" viewBox="0 0 11 11" role="img" aria-label="down"><path d="M3.500 0H7.500V5H11L5.500 11 0 5H3.500Z" fill="#2a67b5"></path></svg></span></td><td class="month"></td></tr>
          </table>
          <p class="dispute">Think this reputation is incorrect? <a class="file" href="#">File reputation dispute here.</a></p>
        </section>
        <world-map class="map"></world-map>
      </main>
    `;
  }
}
